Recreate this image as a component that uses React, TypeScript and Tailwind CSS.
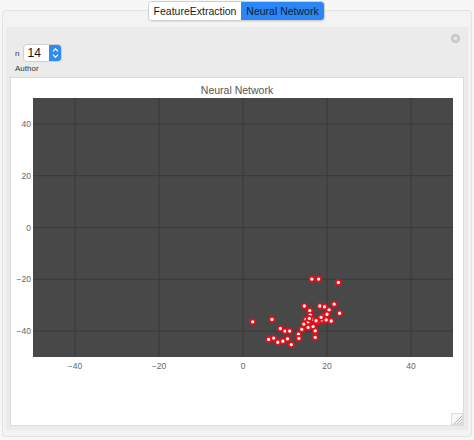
import React from 'react'

const pts: [number, number][] = [
  [16.4, -19.9], [18.0, -19.9], [22.7, -21.2], [2.3, -36.4], [6.9, -35.5],
  [14.6, -30.3], [15.9, -32.1], [18.3, -30.3], [19.4, -30.6], [21.7, -29.6],
  [20.5, -31.8], [23.0, -33.1], [16.0, -33.8], [19.0, -34.2], [20.0, -33.5],
  [15.0, -35.5], [15.5, -36.4], [14.5, -37.3], [16.4, -35.5], [17.8, -36.4],
  [18.8, -35.7], [19.8, -35.7], [21.0, -36.1], [17.4, -36.0], [15.5, -38.6],
  [16.7, -38.3], [17.2, -39.9], [14.0, -39.3], [13.2, -41.2], [13.3, -42.8],
  [17.2, -42.4], [8.9, -39.0], [10.0, -40.0], [11.1, -40.0], [6.1, -43.2],
  [7.3, -42.7], [8.3, -44.3], [9.5, -43.9], [10.6, -43.0], [11.5, -45.2],
  [15.8, -35.1], [18.6, -34.7],
]

// plot box in svg coords
const L = 22
const T = 2
const W = 420
const H = 259
const sx = (v: number) => L + ((v + 50) / 100) * W
const sy = (v: number) => T + ((50 - v) / 100) * H
const ticks = [-40, -20, 0, 20, 40]

function Chart() {
  return (
    <svg width="449" height="284" className="block">
      <rect x={L} y={T} width={W} height={H} fill="#484848" />
      {ticks.map(t => (
        <g key={t}>
          <line x1={sx(t)} x2={sx(t)} y1={T} y2={T + H} stroke="#393939" strokeWidth="1" />
          <line x1={L} x2={L + W} y1={sy(t)} y2={sy(t)} stroke="#393939" strokeWidth="1" />
          <text x={sx(t)} y={T + H + 12} fontSize="8.5" fill="#666" textAnchor="middle">
            {t < 0 ? `\u2212${-t}` : t}
          </text>
          <text x={L - 2} y={sy(t) + 3} fontSize="8.5" fill="#666" textAnchor="end">
            {t < 0 ? `\u2212${-t}` : t}
          </text>
        </g>
      ))}
      {pts.map(([x, y], i) => (
        <circle key={i} cx={sx(x)} cy={sy(y)} r="2.5" fill="#fff2f2" stroke="#e3101c" strokeWidth="1.7" />
      ))}
    </svg>
  )
}

export default function App() {
  return (
    <div className="w-[474px] h-[440px] bg-[#f7f7f7] relative overflow-hidden" style={{ fontFamily: '"Liberation Sans", Arial, sans-serif' }}>
      {/* tab view */}
      <div className="absolute left-[2px] right-[2px] top-[10px] bottom-[3px] border border-[#e2e2e2] bg-[#f3f3f3] rounded-[3px] px-[3px] pt-[16px] pb-[6px] flex">
        <div className="flex-1 bg-[#ebebeb] flex flex-col pl-[4px] pr-[4px] pb-[4px] relative">
          <div className="absolute right-[8px] top-[7px] w-[9px] h-[9px] rounded-full border border-[#bdbdbd] bg-[#d0d0d0] flex items-center justify-center">
            <div className="w-[3px] h-[3px] rounded-full bg-[#ececec]" />
          </div>
          <div className="flex items-center mt-[17px] ml-[5px] h-[18px]">
            <span className="text-[8px] text-[#333] mr-[4px] mt-[2px]">n</span>
            <div className="flex h-[18px] rounded-[4px] overflow-hidden border border-[#cfcfcf] bg-white">
              <div className="w-[25px] text-[12px] leading-[16px] pl-[3px] text-[#111]">14</div>
              <div className="w-[12px] bg-[#2f8cf3] flex flex-col items-center justify-center gap-[2px]">
                <svg width="7" height="4" viewBox="0 0 7 4"><path d="M1 3.3 L3.5 0.8 L6 3.3" fill="none" stroke="white" strokeWidth="1.2" /></svg>
                <svg width="7" height="4" viewBox="0 0 7 4"><path d="M1 0.7 L3.5 3.2 L6 0.7" fill="none" stroke="white" strokeWidth="1.2" /></svg>
              </div>
            </div>
          </div>
          <div className="text-[8px] text-[#333] ml-[5px] mt-[2px] leading-[10px]">Author</div>
          <div className="mt-[3px] flex-1 bg-white border border-[#dcdcdc] relative">
            <div className="text-center text-[10.5px] text-[#555] mt-[6px] leading-[12px]">Neural Network</div>
            <Chart />
            <svg className="absolute right-0 bottom-0" width="12" height="12" viewBox="0 0 12 12">
              <rect x="0.5" y="0.5" width="11" height="11" fill="#f7f7f7" stroke="#dcdcdc" />
              <path d="M3 11 L11 3 M6 11 L11 6 M9 11 L11 9" stroke="#9a9a9a" strokeWidth="0.8" />
            </svg>
          </div>
        </div>
      </div>
      {/* segmented control */}
      <div className="absolute left-[148px] top-[1px] h-[20px] flex rounded-[4px] border border-[#cfcfcf] overflow-hidden text-[10.5px] leading-[18px] shadow-[0_1px_1px_rgba(0,0,0,0.08)]">
        <div className="bg-white w-[92px] text-center text-[#1a1a1a]">FeatureExtraction</div>
        <div className="bg-[#2b86f6] w-[83px] text-center text-[#0f2035]">Neural Network</div>
      </div>
    </div>
  )
}
